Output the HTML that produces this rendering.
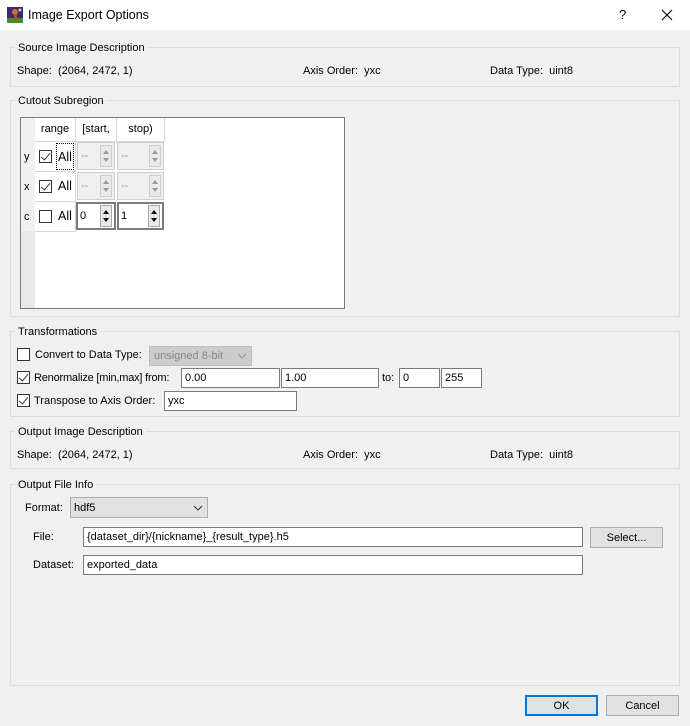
<!DOCTYPE html>
<html><head><style>
*{box-sizing:border-box;margin:0;padding:0}
body{width:690px;height:726px;background:#f0f0f0;font-family:"Liberation Sans",sans-serif;font-size:11px;color:#000;position:relative;overflow:hidden}
.a{position:absolute;white-space:nowrap}
.gb{position:absolute;border:1px solid #dcdcdc;left:10px;width:670px}
.gt{position:absolute;background:#f0f0f0;padding:0 3px;left:15px;line-height:14px}
.inp{position:absolute;background:#fff;border:1px solid #7a7a7a;height:20px;display:flex;align-items:center;padding-left:3px}
.cb{position:absolute;width:13px;height:13px;border:1px solid #333;background:#fff}
.cb.k::after{content:"";position:absolute;left:3px;top:0px;width:4px;height:8px;border:solid #333;border-width:0 1.5px 1.5px 0;transform:rotate(40deg)}
.btn{position:absolute;background:#e1e1e1;border:1px solid #adadad;height:21px;display:flex;align-items:center;justify-content:center}
.cell{position:absolute;border-right:1px solid #d8d8d8;border-bottom:1px solid #d8d8d8}
.spin{position:absolute;height:28px;border:1px solid #cfcfcf;background:#efefef;color:#999;display:flex;align-items:center;padding-left:3px}
.spin.on{border:2px solid #7a7a7a;background:#fff;color:#000;padding-left:2px}
.arr{position:absolute;right:2px;top:2px;width:12px;height:22px;border:1px solid #ccc;background:#e9e9e9}
.arr::before{content:"";position:absolute;left:2px;top:4px;border:3px solid transparent;border-bottom:4px solid #999;border-top:0}
.arr::after{content:"";position:absolute;left:2px;bottom:4px;border:3px solid transparent;border-top:4px solid #999;border-bottom:0}
.on .arr{top:1px;height:22px;border-color:#aaa}
.on .arr::before{border-bottom-color:#000}.on .arr::after{border-top-color:#000}
</style></head><body>
<div class="a" style="left:0;top:0;width:690px;height:30px;background:#fff"></div>
<svg class="a" style="left:7px;top:7px" width="16" height="16"><rect width="16" height="16" fill="#3a2a7a"/><rect y="11" width="16" height="5" fill="#4a8a30"/><circle cx="8" cy="5" r="3" fill="#d0703a"/><rect x="7" y="7" width="3" height="6" fill="#b05020"/><circle cx="13" cy="3" r="1.5" fill="#f0d040"/></svg>
<div class="a" style="left:28px;top:8px;font-size:12.5px">Image Export Options</div>
<div class="a" style="left:619px;top:7px;font-size:13px">?</div>
<svg class="a" style="left:661px;top:9px" width="12" height="12"><path d="M1 1L11 11M11 1L1 11" stroke="#000" stroke-width="1.1"/></svg>

<div class="gb" style="top:47px;height:40px"></div>
<div class="gt" style="top:41px">Source Image Description</div>
<div class="a" style="left:17px;top:65px">Shape:&nbsp; (2064, 2472, 1)</div>
<div class="a" style="left:303px;top:65px">Axis Order:&nbsp; yxc</div>
<div class="a" style="left:490px;top:65px">Data Type:&nbsp; uint8</div>

<div class="gb" style="top:100px;height:217px"></div>
<div class="gt" style="top:94px">Cutout Subregion</div>
<div class="a" style="left:20px;top:117px;width:325px;height:192px;border:1px solid #7a7a7a;background:#fff"></div>
<div class="a" style="left:21px;top:118px;width:14px;height:190px;background:#f0f0f0"></div>
<div class="a" style="left:21px;top:231px;width:14px;height:77px;background:#e8e8e8"></div>
<div class="cell" style="left:35px;top:118px;width:41px;height:24px;text-align:center;line-height:23px">range</div>
<div class="cell" style="left:76px;top:118px;width:41px;height:24px;text-align:center;line-height:23px">[start,</div>
<div class="cell" style="left:117px;top:118px;width:48px;height:24px;text-align:center;line-height:23px">stop)</div>
<div class="cell" style="left:35px;top:142px;width:41px;height:30px"></div>
<div class="cell" style="left:35px;top:172px;width:41px;height:30px"></div>
<div class="cell" style="left:35px;top:202px;width:41px;height:30px"></div>
<div class="a" style="left:24px;top:151px">y</div><div class="a" style="left:24px;top:181px">x</div><div class="a" style="left:24px;top:211px">c</div>
<div class="cb k" style="left:39px;top:150px"></div><div class="a" style="left:56px;top:143px;height:27px;line-height:26px;border:1px dotted #000;padding:0 1px;font-size:12.5px">All</div>
<div class="cb k" style="left:39px;top:180px"></div><div class="a" style="left:58px;top:179px;font-size:12.5px">All</div>
<div class="cb" style="left:39px;top:210px"></div><div class="a" style="left:58px;top:209px;font-size:12.5px">All</div>
<div class="spin" style="left:77px;top:142px;width:38px">--<div class="arr"></div></div>
<div class="spin" style="left:117px;top:142px;width:47px">--<div class="arr"></div></div>
<div class="spin" style="left:77px;top:172px;width:38px">--<div class="arr"></div></div>
<div class="spin" style="left:117px;top:172px;width:47px">--<div class="arr"></div></div>
<div class="spin on" style="left:76px;top:202px;width:40px">0<div class="arr"></div></div>
<div class="spin on" style="left:117px;top:202px;width:47px">1<div class="arr"></div></div>

<div class="gb" style="top:331px;height:86px"></div>
<div class="gt" style="top:325px">Transformations</div>
<div class="cb" style="left:17px;top:348px"></div><div class="a" style="left:35px;top:349px">Convert to Data Type:</div>
<div class="a" style="left:149px;top:346px;width:103px;height:20px;background:#ccc;border:1px solid #bfbfbf;color:#888;line-height:18px;padding-left:4px">unsigned 8-bit</div>
<svg class="a" style="left:237px;top:353px" width="10" height="6"><path d="M1 1L5 5L9 1" stroke="#999" fill="none"/></svg>
<div class="cb k" style="left:17px;top:371px"></div><div class="a" style="left:34px;top:372px;letter-spacing:-0.2px">Renormalize [min,max] from:</div>
<div class="inp" style="left:181px;top:368px;width:99px">0.00</div>
<div class="inp" style="left:281px;top:368px;width:98px">1.00</div>
<div class="a" style="left:382px;top:372px">to:</div>
<div class="inp" style="left:399px;top:368px;width:41px">0</div>
<div class="inp" style="left:441px;top:368px;width:41px">255</div>
<div class="cb k" style="left:17px;top:394px"></div><div class="a" style="left:34px;top:395px">Transpose to Axis Order:</div>
<div class="inp" style="left:164px;top:391px;width:133px">yxc</div>

<div class="gb" style="top:431px;height:38px"></div>
<div class="gt" style="top:425px">Output Image Description</div>
<div class="a" style="left:17px;top:449px">Shape:&nbsp; (2064, 2472, 1)</div>
<div class="a" style="left:303px;top:449px">Axis Order:&nbsp; yxc</div>
<div class="a" style="left:490px;top:449px">Data Type:&nbsp; uint8</div>

<div class="gb" style="top:484px;height:202px"></div>
<div class="gt" style="top:478px">Output File Info</div>
<div class="a" style="left:25px;top:502px">Format:</div>
<div class="a" style="left:70px;top:497px;width:138px;height:21px;background:#e1e1e1;border:1px solid #adadad;display:flex;align-items:center;padding-left:3px">hdf5</div>
<svg class="a" style="left:193px;top:505px" width="10" height="6"><path d="M1 1L5 5L9 1" stroke="#333" fill="none"/></svg>
<div class="a" style="left:33px;top:531px">File:</div>
<div class="inp" style="left:83px;top:527px;width:500px">{dataset_dir}/{nickname}_{result_type}.h5</div>
<div class="btn" style="left:590px;top:527px;width:73px">Select...</div>
<div class="a" style="left:33px;top:559px">Dataset:</div>
<div class="inp" style="left:83px;top:555px;width:500px">exported_data</div>

<div class="btn" style="left:525px;top:695px;width:73px;border:2px solid #0078d7">OK</div>
<div class="btn" style="left:606px;top:695px;width:73px">Cancel</div>
</body></html>
